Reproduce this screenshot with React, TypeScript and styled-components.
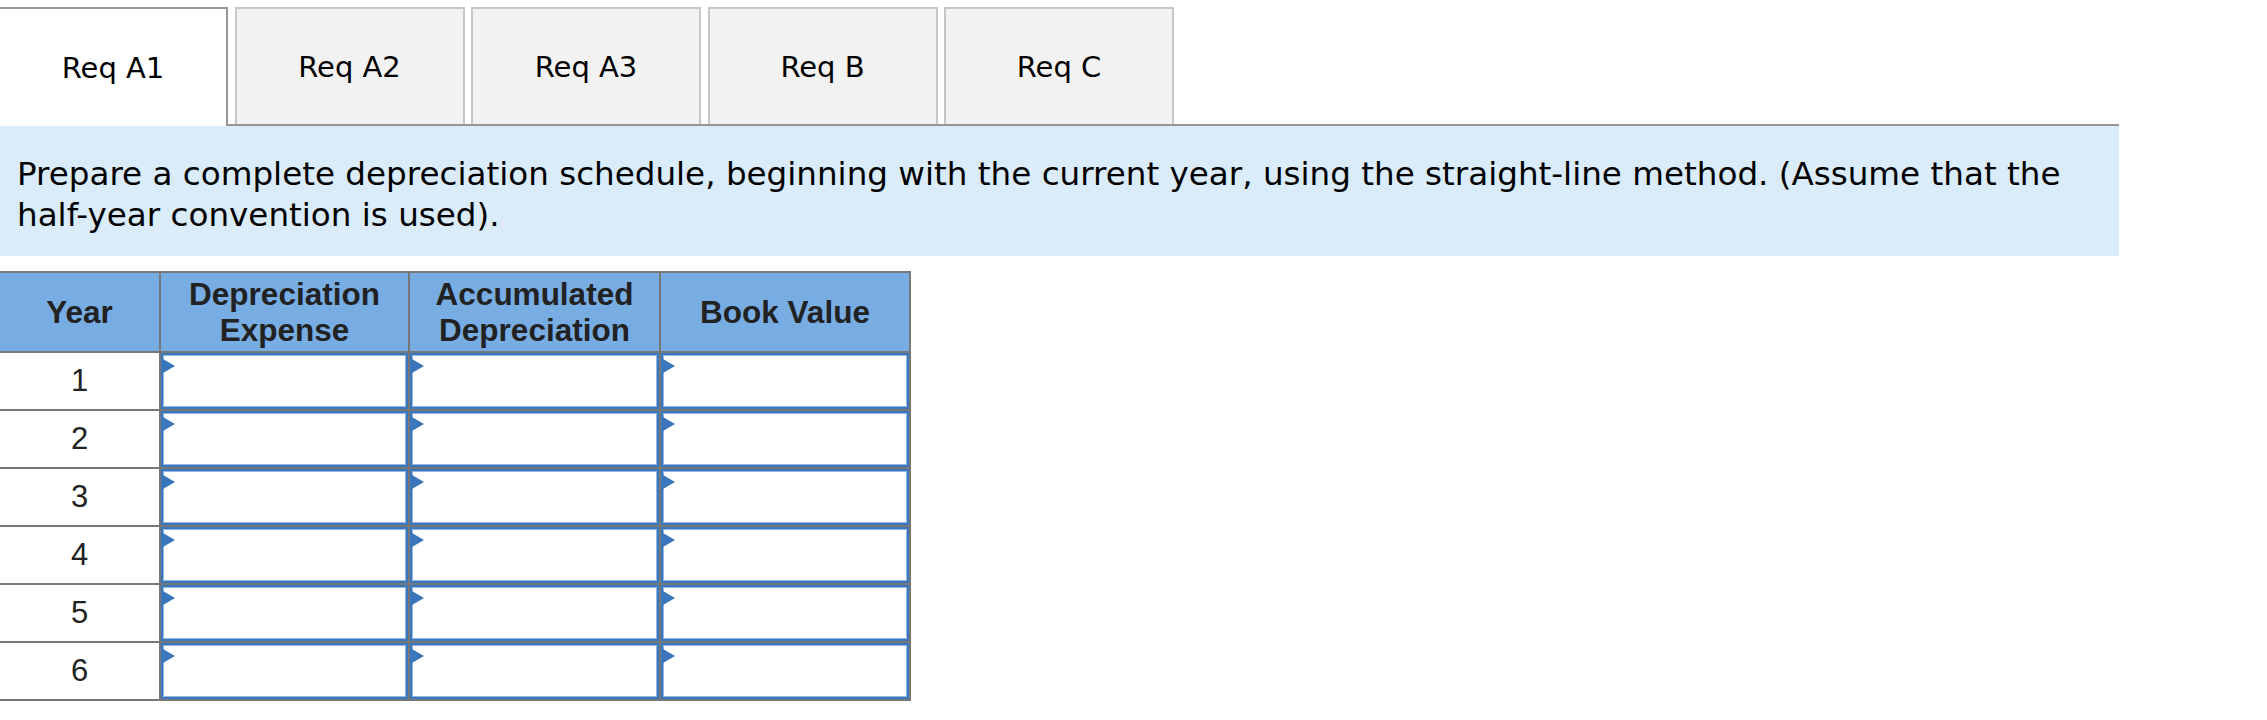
import React from "react";
import styled, { createGlobalStyle } from "styled-components";

const GlobalStyle = createGlobalStyle`
  *, *::before, *::after { box-sizing: border-box; }
  html, body { margin: 0; padding: 0; background: #ffffff; }
  body { font-family: "DejaVu Sans", Verdana, sans-serif; color: #000; }
`;

const Page = styled.div`
  width: 2119px;
  overflow: hidden;
`;

const TabBar = styled.div`
  display: flex;
  align-items: flex-start;
  gap: 6.5px;
  padding-top: 7px;
  border-bottom: 2px solid #959595;
`;

const Tab = styled.button<{ $active?: boolean }>`
  display: flex;
  align-items: center;
  justify-content: center;
  width: 230px;
  height: ${(p) => (p.$active ? "119px" : "117px")};
  margin: 0 0 ${(p) => (p.$active ? "-2px" : "0")} ${(p) => (p.$active ? "-2px" : "0")};
  padding: 0;
  background: ${(p) => (p.$active ? "#ffffff" : "#f2f2f2")};
  border: 2px solid ${(p) => (p.$active ? "#979797" : "#c6c6c6")};
  border-bottom: none;
  font-family: "DejaVu Sans", Verdana, sans-serif;
  font-size: 29px;
  color: #000;
  cursor: pointer;
`;

const Instructions = styled.div`
  background: #daebf9;
  padding: 28px 0 20px 17px;
  font-family: "DejaVu Sans", Verdana, sans-serif;
  font-size: 32.6px;
  line-height: 41px;
  color: #000;
`;

const NoBreak = styled.span`
  white-space: nowrap;
`;

const Schedule = styled.div`
  display: grid;
  width: fit-content;
  margin-top: 15px;
  grid-template-columns: 159px 247px 249px 248px;
  grid-template-rows: 78px repeat(6, 56px);
  gap: 2px;
  padding: 2px 2px 2px 0;
  background: #777777;
`;

const HeadCell = styled.div`
  display: flex;
  align-items: center;
  justify-content: center;
  text-align: center;
  padding: 0 6px;
  background: #78ade4;
  font-family: "Liberation Sans", Arial, sans-serif;
  font-weight: bold;
  font-size: 31.5px;
  line-height: 36px;
  color: #222222;
`;

const YearCell = styled.div`
  display: flex;
  align-items: center;
  justify-content: center;
  background: #ffffff;
  font-family: "Liberation Sans", Arial, sans-serif;
  font-size: 31px;
  color: #222222;
`;

const InputCell = styled.div`
  position: relative;
  display: flex;
  background: #ffffff;
`;

const AmountInput = styled.input`
  width: 100%;
  height: 100%;
  margin: 0;
  padding: 0 8px;
  border: 2px solid #3b77bc;
  box-shadow: inset 0 0 0 1px #93b7e2;
  background: #ffffff;
  outline: none;
  font-family: "Liberation Sans", Arial, sans-serif;
  font-size: 28px;
  text-align: right;
`;

const Marker = styled.span`
  position: absolute;
  left: 2px;
  top: 6px;
  width: 0;
  height: 0;
  border-left: 12px solid #3a76bb;
  border-top: 7.5px solid transparent;
  border-bottom: 7.5px solid transparent;
  pointer-events: none;
`;

const tabs = ["Req A1", "Req A2", "Req A3", "Req B", "Req C"];
const headers = ["Year", "Depreciation Expense", "Accumulated Depreciation", "Book Value"];
const years = [1, 2, 3, 4, 5, 6];

export default function App() {
  return (
    <Page>
      <GlobalStyle />
      <TabBar>
        {tabs.map((t, i) => (
          <Tab key={t} $active={i === 0}>
            {t}
          </Tab>
        ))}
      </TabBar>
      <Instructions>
        Prepare a complete depreciation schedule, beginning with the current year, using the
        straight-line method. (Assume that the <NoBreak>half-year</NoBreak> convention is used).
      </Instructions>
      <Schedule>
        {headers.map((h) => (
          <HeadCell key={h}>{h}</HeadCell>
        ))}
        {years.map((y) => (
          <React.Fragment key={y}>
            <YearCell>{y}</YearCell>
            {[0, 1, 2].map((c) => (
              <InputCell key={c}>
                <AmountInput type="text" aria-label={`${headers[c + 1]} year ${y}`} />
                <Marker />
              </InputCell>
            ))}
          </React.Fragment>
        ))}
      </Schedule>
    </Page>
  );
}
